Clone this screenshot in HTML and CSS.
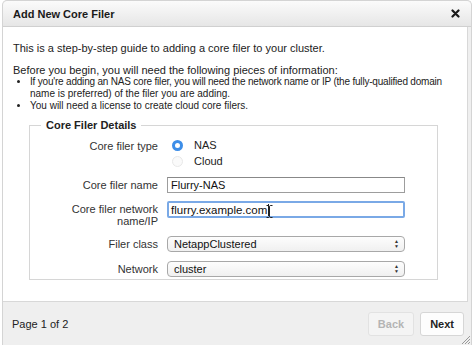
FILE: index.html
```html
<!doctype html>
<html>
<head>
<meta charset="utf-8">
<title>Add New Core Filer</title>
<link rel="stylesheet" href="styles.css">
</head>
<body>
<div class="dialog">
  <div class="titlebar">
    <span class="title">Add New Core Filer</span>
    <svg class="close" width="9" height="9" viewBox="0 0 9 9"><path d="M1.5 1.5L7.5 7.5M7.5 1.5L1.5 7.5" stroke="#1a1a1a" stroke-width="2.2" stroke-linecap="round"/></svg>
  </div>
  <div class="content">
    <p class="intro">This is a step-by-step guide to adding a core filer to your cluster.</p>
    <p class="before">Before you begin, you will need the following pieces of information:</p>
    <ul class="needs">
      <li><span class="tight">If you're adding an NAS core filer, you will need the network name or IP (the fully-qualified domain</span><br>name is preferred) of the filer you are adding.</li>
      <li>You will need a license to create cloud core filers.</li>
    </ul>
    <fieldset class="details">
      <legend>Core Filer Details</legend>
      <div class="row row-type">
        <span class="label">Core filer type</span>
        <div class="radios">
          <label class="radio"><span class="dot on"></span>NAS</label>
          <label class="radio"><span class="dot"></span>Cloud</label>
        </div>
      </div>
      <div class="row">
        <span class="label">Core filer name</span>
        <input class="text" type="text" value="Flurry-NAS">
      </div>
      <div class="row row-net">
        <span class="label">Core filer network<br>name/IP</span>
        <div class="text focus">flurry.example.com<span class="caret"></span>
          <svg class="ibeam" width="7" height="13" viewBox="0 0 7 13"><path d="M0.5 0.5h2.2l0.8 0.8 0.8-0.8h2.2M3.5 1.3v10.4M0.5 12.5h2.2l0.8-0.8 0.8 0.8h2.2" fill="none" stroke="#222" stroke-width="1"/></svg>
        </div>
      </div>
      <div class="row row-select">
        <span class="label">Filer class</span>
        <div class="select">NetappClustered<span class="arrows">&#9650;<br>&#9660;</span></div>
      </div>
      <div class="row row-select">
        <span class="label">Network</span>
        <div class="select">cluster<span class="arrows">&#9650;<br>&#9660;</span></div>
      </div>
    </fieldset>
  </div>
  <div class="footer">
    <span class="page">Page 1 of 2</span>
    <div class="buttons">
      <button class="btn" disabled>Back</button>
      <button class="btn next">Next</button>
    </div>
    <svg class="grip" width="10" height="10" viewBox="0 0 10 10"><path d="M9 1L1 9M9 4L4 9M9 7L7 9" stroke="#999" stroke-width="1"/></svg>
  </div>
</div>
</body>
</html>
```

FILE: styles.css
```css
html, body, p, ul, li, fieldset, legend {
  margin: 0;
  padding: 0;
}

body {
  background: #fff;
  font-family: "Liberation Sans", Arial, sans-serif;
  font-size: 11px;
  color: #222;
}

.dialog {
  width: 470px;
  height: 345px;
  margin-left: 2px;
  display: flex;
  flex-direction: column;
  background: #efefef;
  border: 1px solid #d4d4d4;
  border-bottom: none;
  border-radius: 5px 5px 0 0;
  box-sizing: border-box;
}

.titlebar {
  height: 25px;
  flex: none;
  display: flex;
  align-items: center;
  justify-content: space-between;
  padding: 0 10px 0 10px;
  background: linear-gradient(#fbfbfb, #e6e6e6);
  border-bottom: 1px solid #d0d0d0;
  border-radius: 5px 5px 0 0;
}
.title {
  font-weight: bold;
  font-size: 11px;
  color: #1a1a1a;
}
.close {
  margin-right: 1px;
}

.content {
  flex: none;
  height: 275px;
  box-sizing: border-box;
  margin-right: 3px;
  background: #fff;
  border-right: 1px solid #d8d8d8;
  border-bottom: 1px solid #d8d8d8;
  padding: 15px 10px 0 10px;
  line-height: 12px;
}
.intro {
  margin-bottom: 10px;
}
.needs {
  padding-left: 17px;
  list-style: disc;
  font-size: 10px;
}
.tight {
  white-space: nowrap;
  letter-spacing: -0.2px;
}

.details {
  margin: 7px 19px 0 16px;
  border: 1px solid #d6d6d6;
  padding: 6px 0 10px 0;
  height: 161px;
  box-sizing: border-box;
}
.details legend {
  margin-left: 11px;
  padding: 0 5px;
  font-weight: bold;
}

.row {
  display: flex;
  align-items: center;
  margin-top: 8px;
}
.row-type {
  align-items: flex-start;
  margin-top: 0;
}
.row-net {
  align-items: flex-start;
}
.row-select {
  margin-top: 9px;
}
.label {
  width: 128px;
  flex: none;
  text-align: right;
  margin-right: 9px;
  color: #333;
}
.row-type .label {
  margin-top: 3px;
}
.row-net .label {
  margin-top: 2px;
}

.radios {
  display: flex;
  flex-direction: column;
}
.radio {
  display: flex;
  align-items: center;
  height: 16px;
  margin-left: 5px;
}
.dot {
  width: 11px;
  height: 11px;
  border-radius: 50%;
  box-sizing: border-box;
  border: 1px solid #e8e8e8;
  background: #fafafa;
  margin-right: 11px;
}
.dot.on {
  border: 3px solid #3d8ee8;
  background: #fff;
}

.text {
  width: 238px;
  height: 16px;
  box-sizing: border-box;
  border: 1px solid #9d9d9d;
  border-top-color: #888;
  padding: 0 3px;
  font-family: "Liberation Sans", Arial, sans-serif;
  font-size: 11px;
  color: #111;
  background: #fff;
  outline: none;
  margin: 0;
}
.text.focus {
  position: relative;
  display: flex;
  align-items: center;
  height: 17px;
  border: 2px solid #7aa9e6;
  border-radius: 2px;
  padding: 0 2px;
  font-size: 11.5px;
}
.caret {
  display: inline-block;
  width: 1px;
  height: 12px;
  background: #222;
  margin-left: 1px;
}
.ibeam {
  position: absolute;
  left: 97px;
  top: 2px;
}

.select {
  position: relative;
  width: 238px;
  height: 16px;
  box-sizing: border-box;
  border: 1px solid #a8a8a8;
  border-radius: 4px;
  background: linear-gradient(#fdfdfd, #f0f0f0);
  padding: 0 6px;
  display: flex;
  align-items: center;
  color: #111;
}
.arrows {
  position: absolute;
  right: 5px;
  top: 2px;
  font-size: 5px;
  line-height: 5px;
  color: #333;
}

.footer {
  flex: 1;
  position: relative;
  display: flex;
  align-items: center;
  justify-content: space-between;
  padding: 0 7px 0 9px;
  background: #efefef;
}
.page {
  color: #222;
}
.buttons {
  display: flex;
  gap: 6px;
}
.btn {
  height: 24px;
  padding: 0 9px;
  font-family: "Liberation Sans", Arial, sans-serif;
  font-size: 11px;
  font-weight: bold;
  color: #222;
  background: #fdfdfd;
  border: 1px solid #d6d6d6;
  border-radius: 3px;
}
.btn[disabled] {
  color: #b4b4b4;
  background: #f4f4f4;
  border-color: #e2e2e2;
}
.grip {
  position: absolute;
  right: 0;
  bottom: 0;
}
```
